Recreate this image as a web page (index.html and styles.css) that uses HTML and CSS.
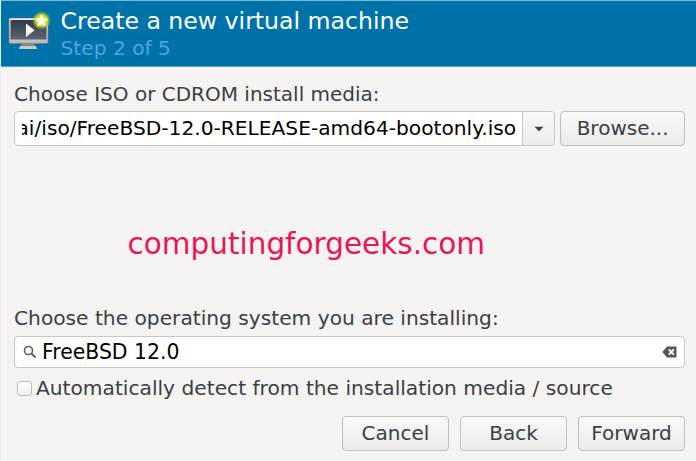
FILE: index.html
```html
<!DOCTYPE html>
<html lang="en">
<head>
<meta charset="utf-8">
<title>Create a new virtual machine</title>
<link rel="stylesheet" href="styles.css">
</head>
<body>
<main class="dialog">
  <header class="header">
    <svg class="vm-icon" viewBox="0 0 44 44" width="44" height="44">
      <defs>
        <linearGradient id="screen" x1="0" y1="0" x2="0" y2="1"><stop offset="0" stop-color="#303b47"/><stop offset="1" stop-color="#5d6773"/></linearGradient>
        <linearGradient id="frame" x1="0" y1="0" x2="0" y2="1"><stop offset="0" stop-color="#f4f4f2"/><stop offset="1" stop-color="#b9bab8"/></linearGradient>
        <radialGradient id="glow"><stop offset="0" stop-color="#f6f29a"/><stop offset=".6" stop-color="#c7d62b"/><stop offset="1" stop-color="#a3c52c" stop-opacity="0"/></radialGradient>
      </defs>
      <path d="M15 33h12l1 4h-14z" fill="#858987"/>
      <path d="M13 37h16l1 3h-18z" fill="#c9cac7"/>
      <rect x="2" y="9" width="39" height="25.500" rx="1.500" fill="url(#frame)" stroke="#777c7c" stroke-width=".7"/>
      <rect x="3.500" y="11" width="36" height="19.500" fill="url(#screen)"/>
      <path d="M19 14.500v13.500l8.500-6.700z" fill="#fff"/>
      <circle cx="34.500" cy="11.500" r="9.500" fill="url(#glow)"/>
      <path d="M34.500 5l2 4.200 4.600.6-3.300 3.200.8 4.500-4.100-2.200-4.100 2.200.8-4.500-3.300-3.200 4.600-.6z" fill="#fffde2"/>
    </svg>
    <div class="heading">
      <h1 class="title">Create a new virtual machine</h1>
      <p class="step">Step 2 of 5</p>
    </div>
  </header>
  <section class="media">
    <div class="label media-label">Choose ISO or CDROM install media:</div>
    <div class="media-row">
      <div class="combo">
        <div class="path"><span>ai/iso/FreeBSD-12.0-RELEASE-amd64-bootonly.iso</span></div>
        <button class="drop" aria-label="Open list"><svg width="10" height="6" viewBox="0 0 10 6"><path d="M.5.800h9L5 5.500z" fill="#454849"/></svg></button>
      </div>
      <button class="button browse">Browse...</button>
    </div>
  </section>
  <div class="watermark">computingforgeeks.com</div>
  <section class="system">
    <div class="label">Choose the operating system you are installing:</div>
    <div class="search">
      <svg class="lens" width="14" height="14" viewBox="0 0 14 14" fill="none" stroke="#5d6060"><circle cx="5.500" cy="5.500" r="4" stroke-width="1.600"/><path d="M8.500 8.500l4 4" stroke-width="2"/></svg>
      <span class="query">FreeBSD 12.0</span>
      <svg class="clear" width="15" height="12" viewBox="0 0 15 12"><path d="M5 .5h9.500v11H5L.3 6z" fill="#555858"/><path d="M6.800 3.300l5 5.400M11.800 3.300l-5 5.400" stroke="#fff" stroke-width="1.900"/></svg>
    </div>
    <label class="detect"><span class="box"></span><span class="detect-text">Automatically detect from the installation media / source</span></label>
  </section>
  <footer class="actions">
    <button class="button">Cancel</button>
    <button class="button">Back</button>
    <button class="button">Forward</button>
  </footer>
</main>
</body>
</html>
```
FILE: styles.css
```css
* { box-sizing: border-box; }
body {
  margin: 0;
  font: 20.200px/24px "DejaVu Sans", sans-serif;
  color: #3b4042;
}
.dialog {
  width: 696px;
  height: 461px;
  background: #f5f4f2;
  border-left: 1px solid #e4eef3;
  display: flex;
  flex-direction: column;
  overflow: hidden;
}
.header {
  height: 67px;
  flex: none;
  background: #0072aa;
  border-top: 1px solid #7db8d4;
  border-bottom: 1px solid #5ba0c2;
  display: flex;
  padding: 5px 0 0 6px;
}
.vm-icon { flex: none; margin-top: 3px; }
.heading { margin-left: 9.500px; }
.title { margin: 0; font-size: 23.600px; line-height: 30px; font-weight: 400; color: #fff; white-space: nowrap; }
.step { margin: 0; line-height: 25px; color: #4da6dc; }
.media { padding: 15px 11px 0 13px; height: 79px; flex: none; }
.label { height: 24px; white-space: nowrap; }
.media-label { font-size: 20px; }
.media-row { display: flex; gap: 5px; margin-top: 5px; }
.combo {
  width: 542px;
  height: 35px;
  display: flex;
  border: 1px solid #c8c8c5;
  border-radius: 4px;
  background: #fff;
  overflow: hidden;
}
.path {
  flex: 1;
  min-width: 0;
  margin: 0 6px 0 7px;
  overflow: hidden;
  display: flex;
  justify-content: flex-end;
  line-height: 33px;
  color: #000;
  white-space: nowrap;
}
.drop {
  width: 32px;
  border: 0;
  border-left: 1px solid #c8c8c5;
  padding: 0;
  background: linear-gradient(#f9f9f8, #ececea);
  display: grid;
  place-items: center;
}
.button {
  width: 107px;
  height: 35px;
  padding: 0 0 2px;
  border: 1px solid #c0c0bd;
  border-radius: 4px;
  background: linear-gradient(#f9f9f8, #ebebe9);
  font: inherit;
  font-size: 20px;
  color: inherit;
}
.browse { width: 125px; }
.watermark {
  height: 160px;
  flex: none;
  padding: 82px 0 0 126.500px;
  font-size: 29.500px;
  line-height: 32px;
  color: #ec1558;
}
.system { padding: 0 11px 0 13px; }
.search {
  height: 32px;
  margin-top: 6px;
  padding: 0 7px 0 8px;
  border: 1px solid #c8c8c5;
  border-radius: 4px;
  background: #fff;
  display: flex;
  align-items: center;
}
.query { flex: 1; margin-left: 5px; line-height: 30px; font-size: 20.400px; color: #000; }
.detect { display: flex; align-items: center; height: 24px; margin: 8px 0 0 3px; }
.box { width: 15px; height: 15px; border: 1px solid #bebebb; border-radius: 3px; background: linear-gradient(#fff, #f1f1ef); }
.detect-text { margin-left: 4px; white-space: nowrap; }
.actions { display: flex; justify-content: flex-end; gap: 11px; padding: 16px 11px 0 0; }
```
